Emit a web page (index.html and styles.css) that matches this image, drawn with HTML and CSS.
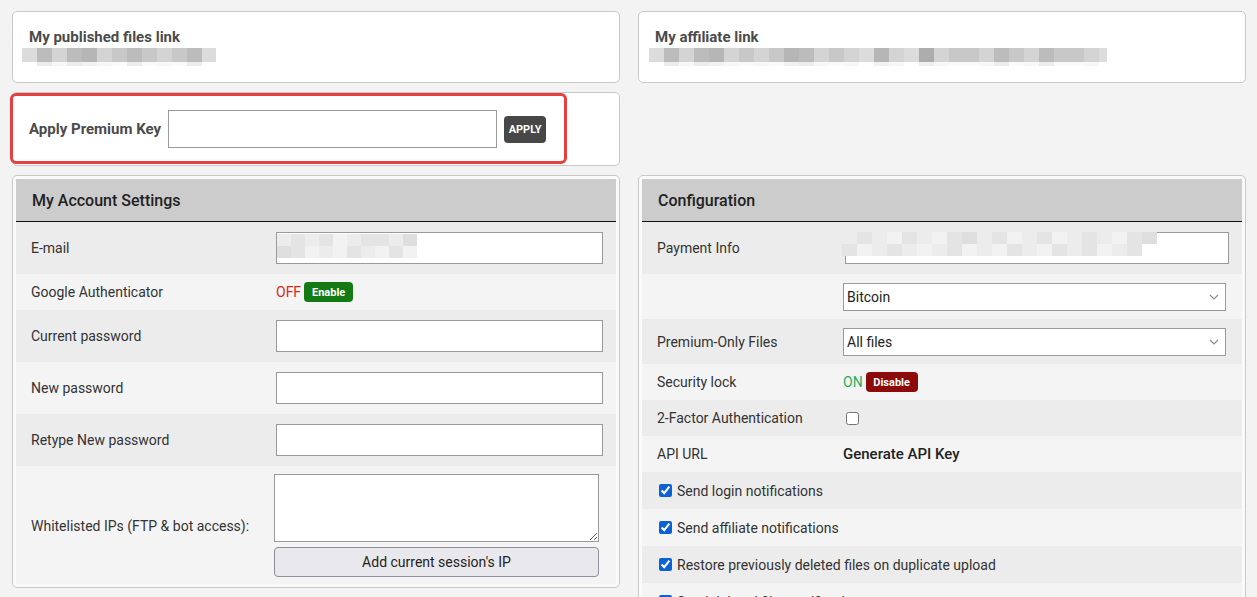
FILE: index.html
```html
<!DOCTYPE html>
<html lang="en">
<head>
<meta charset="utf-8">
<title>Account</title>
<link rel="stylesheet" href="styles.css">
</head>
<body>
<div class="page">
  <section class="card link-card">
    <div class="card-title">My published files link</div>
    <div class="blur blur-pub">
      <i class="c5"></i><i class="c2"></i><i class="c1"></i><i class="c2"></i><i class="c4"></i><i class="c1"></i><i class="c3"></i><i class="c2"></i><i class="c3"></i><i class="c1"></i><i class="c3"></i><i class="c2"></i><i class="c5"></i>
    </div>
  </section>
  <section class="card link-card">
    <div class="card-title">My affiliate link</div>
    <div class="blur blur-aff">
      <i class="c5"></i><i class="c2"></i><i class="c1"></i><i class="c2"></i><i class="c4"></i><i class="c1"></i><i class="c3"></i><i class="c1"></i><i class="c3"></i><i class="c4"></i><i class="c2"></i><i class="c1"></i><i class="c3"></i><i class="c1"></i><i class="c5"></i><i class="c4"></i><i class="c1"></i><i class="c5"></i><i class="c6"></i><i class="c1"></i><i class="c3"></i><i class="c3"></i><i class="c1"></i><i class="c2"></i><i class="c3"></i><i class="c1"></i><i class="c2"></i><i class="c3"></i><i class="c3"></i><i class="c1"></i><i class="c5"></i>
    </div>
  </section>
  <section class="card apply-card">
    <label class="apply-label" for="pk">Apply Premium Key</label>
    <input class="apply-input" id="pk" type="text">
    <button class="apply-btn" type="button">APPLY</button>
    <div class="highlight"></div>
  </section>
  <div class="empty"></div>

  <section class="panel">
    <h2 class="panel-head">My Account Settings</h2>
    <div class="rows rows-left">
      <div class="row row-input">
        <div class="lbl">E-mail</div>
        <div class="ctl">
          <div class="field-wrap">
            <input class="field" type="text">
            <div class="blur2 blur-mail">
              <div><i class="l1"></i><i class="l2"></i><i class="l1"></i><i class="l2"></i><i class="l3"></i><i class="l1"></i><i class="l2"></i><i class="l2"></i><i class="l1"></i><i class="l4"></i></div>
              <div><i class="l4"></i><i class="l2"></i><i class="l3"></i><i class="l1"></i><i class="l3"></i><i class="l2"></i><i class="l1"></i><i class="l3"></i><i class="l2"></i><i class="l3"></i></div>
            </div>
          </div>
        </div>
      </div>
      <div class="row row-status">
        <div class="lbl">Google Authenticator</div>
        <div class="ctl"><span class="off">OFF</span><button class="pill pill-green" type="button">Enable</button></div>
      </div>
      <div class="row row-input">
        <div class="lbl">Current password</div>
        <div class="ctl"><input class="field" type="password"></div>
      </div>
      <div class="row row-input">
        <div class="lbl">New password</div>
        <div class="ctl"><input class="field" type="password"></div>
      </div>
      <div class="row row-input">
        <div class="lbl">Retype New password</div>
        <div class="ctl"><input class="field" type="password"></div>
      </div>
      <div class="row row-ips">
        <div class="lbl">Whitelisted IPs (FTP &amp; bot access):</div>
        <div class="ctl ctl-stack">
          <textarea class="ips"></textarea>
          <button class="add-ip" type="button">Add current session's IP</button>
        </div>
      </div>
    </div>
  </section>

  <section class="panel">
    <h2 class="panel-head">Configuration</h2>
    <div class="rows rows-right">
      <div class="row row-input">
        <div class="lbl">Payment Info</div>
        <div class="ctl">
          <div class="field-wrap">
            <input class="field field-pay" type="text">
            <div class="blur2 blur-pay">
              <div><i class="l1"></i><i class="l2"></i><i class="l1"></i><i class="l3"></i><i class="l2"></i><i class="l1"></i><i class="l3"></i><i class="l2"></i><i class="l4"></i><i class="l1"></i><i class="l2"></i><i class="l3"></i><i class="l1"></i><i class="l2"></i><i class="l3"></i><i class="l1"></i><i class="l2"></i><i class="l1"></i><i class="l3"></i><i class="l2"></i><i class="l4"></i></div>
              <div><i class="l2"></i><i class="l3"></i><i class="l1"></i><i class="l2"></i><i class="l1"></i><i class="l3"></i><i class="l1"></i><i class="l2"></i><i class="l3"></i><i class="l1"></i><i class="l3"></i><i class="l2"></i><i class="l1"></i><i class="l3"></i><i class="l2"></i><i class="l1"></i><i class="l2"></i><i class="l3"></i><i class="l1"></i><i class="l2"></i></div>
            </div>
          </div>
        </div>
      </div>
      <div class="row row-select">
        <div class="lbl"></div>
        <div class="ctl">
          <div class="select-wrap">
            <select class="sel"><option>Bitcoin</option></select>
            <svg class="chev" width="10" height="6" viewBox="0 0 10 6"><path d="M1 1l4 4 4-4" fill="none" stroke="#8a8a8a" stroke-width="1.2"/></svg>
          </div>
        </div>
      </div>
      <div class="row row-select">
        <div class="lbl">Premium-Only Files</div>
        <div class="ctl">
          <div class="select-wrap">
            <select class="sel"><option>All files</option></select>
            <svg class="chev" width="10" height="6" viewBox="0 0 10 6"><path d="M1 1l4 4 4-4" fill="none" stroke="#8a8a8a" stroke-width="1.2"/></svg>
          </div>
        </div>
      </div>
      <div class="row row-status">
        <div class="lbl">Security lock</div>
        <div class="ctl"><span class="on">ON</span><button class="pill pill-red" type="button">Disable</button></div>
      </div>
      <div class="row row-status">
        <div class="lbl">2-Factor Authentication</div>
        <div class="ctl"><input class="chk" type="checkbox"></div>
      </div>
      <div class="row row-status">
        <div class="lbl">API URL</div>
        <div class="ctl"><span class="gen">Generate API Key</span></div>
      </div>
      <div class="row-check"><input class="chk" type="checkbox" checked><span>Send login notifications</span></div>
      <div class="row-check"><input class="chk" type="checkbox" checked><span>Send affiliate notifications</span></div>
      <div class="row-check"><input class="chk" type="checkbox" checked><span>Restore previously deleted files on duplicate upload</span></div>
      <div class="row-check"><input class="chk" type="checkbox" checked><span>Send deleted files notifications</span></div>
    </div>
  </section>
</div>
</body>
</html>
```
FILE: styles.css
```css
* { box-sizing: border-box; }
html, body { margin: 0; }
body {
  background: #f3f3f3;
  font-family: Roboto, "Liberation Sans", sans-serif;
  font-size: 14px;
  color: #333;
}
.page {
  display: grid;
  grid-template-columns: 608px 608px;
  column-gap: 18px;
  row-gap: 9px;
  padding: 11px 0 20px 12px;
  align-items: start;
}
.card {
  background: #fff;
  border: 1px solid #c9c9c9;
  border-radius: 5px;
}
.link-card {
  height: 72px;
  padding: 16px 16px;
}
.card-title {
  font-weight: 700;
  font-size: 15px;
  line-height: 18px;
  color: #4b4b4b;
}
.blur {
  display: flex;
  margin: 2px 0 0 -7px;
  height: 18px;
  overflow: hidden;
}
.blur-pub { width: 194px; }
.blur-aff { width: 458px; margin-left: -6px; }
.blur i { flex: none; width: 15px; height: 18px; }
.c1 { background: linear-gradient(#d4d4d4 0 14px, #f7f7f7 14px); }
.c2 { background: linear-gradient(#bcbcbc 0 14px, #ececec 14px); }
.c3 { background: linear-gradient(#c8c8c8 0 14px, #fafafa 14px); }
.c4 { background: linear-gradient(#b6b6b6 0 14px, #f1f1f1 14px); }
.c5 { background: linear-gradient(#dcdcdc 0 14px, #ffffff 14px); }
.c6 { background: linear-gradient(#adadad 0 14px, #efefef 14px); }

.apply-card {
  position: relative;
  height: 74px;
  display: flex;
  align-items: center;
  padding: 0 16px;
}
.apply-label {
  font-weight: 700;
  font-size: 15px;
  color: #4b4b4b;
  margin-right: 7px;
}
.apply-input {
  width: 329px;
  height: 38px;
  border: 1px solid #9a9a9a;
  margin: 0 7px 0 0;
  background: #fff;
}
.apply-btn {
  width: 42px;
  height: 27px;
  border: none;
  border-radius: 4px;
  background: #474747;
  color: #fff;
  font-family: Roboto, "Liberation Sans", sans-serif;
  font-weight: 700;
  font-size: 11px;
  padding: 0;
}
.highlight {
  position: absolute;
  left: -3px;
  top: 0;
  width: 557px;
  height: 71px;
  border: 3px solid #e63f3f;
  border-radius: 6px;
  pointer-events: none;
}

.panel {
  background: #fafafa;
  border: 1px solid #c9c9c9;
  border-radius: 5px;
  padding: 3px;
}
.panel-head {
  margin: 0;
  height: 43px;
  background: #cccccc;
  border-bottom: 1px solid #111;
  padding-left: 16px;
  display: flex;
  align-items: center;
  font-size: 16px;
  font-weight: 500;
  color: #222;
}
.row {
  display: grid;
  align-items: center;
}
.rows-left .row { grid-template-columns: 245px 1fr; }
.rows-right .row { grid-template-columns: 186px 1fr; }
.rows > :nth-child(odd) { background: #ececec; }
.rows > :nth-child(even) { background: #f4f4f4; }
.lbl { padding-left: 15px; color: #333; }
.ctl {
  padding: 0 13px 0 15px;
  display: flex;
  align-items: center;
}
.row-input { height: 52px; }
.row-select { height: 45px; }
.row-status { height: 36px; }
.row-ips { padding: 8px 0 7px; }

.field-wrap { position: relative; width: 100%; }
.field {
  display: block;
  width: 100%;
  height: 32px;
  border: 1px solid #9a9a9a;
  background: #fff;
  margin: 0;
}
.field-pay { margin-left: 2px; width: calc(100% - 2px); }
.blur2 {
  position: absolute;
  display: flex;
  flex-direction: column;
  pointer-events: none;
}
.blur2 div { display: flex; }
.blur2 i { flex: none; width: 15px; height: 12px; }
.blur-mail { left: 1px; top: 2px; }
.blur-mail i { width: 14px; }
.blur-pay { left: -1px; top: 0; }
.l1 { background: #ececec; }
.l2 { background: #e4e4e4; }
.l3 { background: #f2f2f2; }
.l4 { background: #dedede; }

.off { color: #d42a1c; }
.on { color: #1fae5c; }
.pill {
  margin-left: 3px;
  height: 20px;
  border: none;
  border-radius: 4px;
  color: #fff;
  font-family: Roboto, "Liberation Sans", sans-serif;
  font-weight: 700;
  font-size: 11px;
  padding: 0 7px;
}
.pill-green { background: #147b14; width: 49px; }
.pill-red { background: #8d0a0a; width: 52px; }

.ctl-stack {
  flex-direction: column;
  align-items: stretch;
  gap: 5px;
}
.ips {
  display: block;
  margin: 0 0 0 -2px;
  width: calc(100% - 2px);
  height: 68px;
  border: 1px solid #9a9a9a;
  background: #fff;
  resize: vertical;
}
.add-ip {
  margin: 0 0 0 -2px;
  width: calc(100% - 2px);
  height: 30px;
  border: 1px solid #8f8f9d;
  border-radius: 4px;
  background: #e9e9ed;
  color: #222;
  font-family: Roboto, "Liberation Sans", sans-serif;
  font-size: 14px;
}

.select-wrap { position: relative; width: 383px; }
.sel {
  display: block;
  width: 100%;
  height: 28px;
  appearance: none;
  -webkit-appearance: none;
  border: 1px solid #9a9a9a;
  border-radius: 0;
  background: #fff;
  padding: 0 0 0 3px;
  font-family: Roboto, "Liberation Sans", sans-serif;
  font-size: 14px;
  color: #222;
}
.chev {
  position: absolute;
  right: 7px;
  top: 11px;
  pointer-events: none;
}
.chk {
  width: 13px;
  height: 13px;
  margin: 0 0 0 3px;
  accent-color: #0b62d6;
}
.gen {
  font-weight: 500;
  font-size: 15px;
  color: #222;
}
.row-check {
  height: 37px;
  display: flex;
  align-items: center;
  padding-left: 17px;
  gap: 5px;
}
.row-check .chk { margin: 0; }
```
